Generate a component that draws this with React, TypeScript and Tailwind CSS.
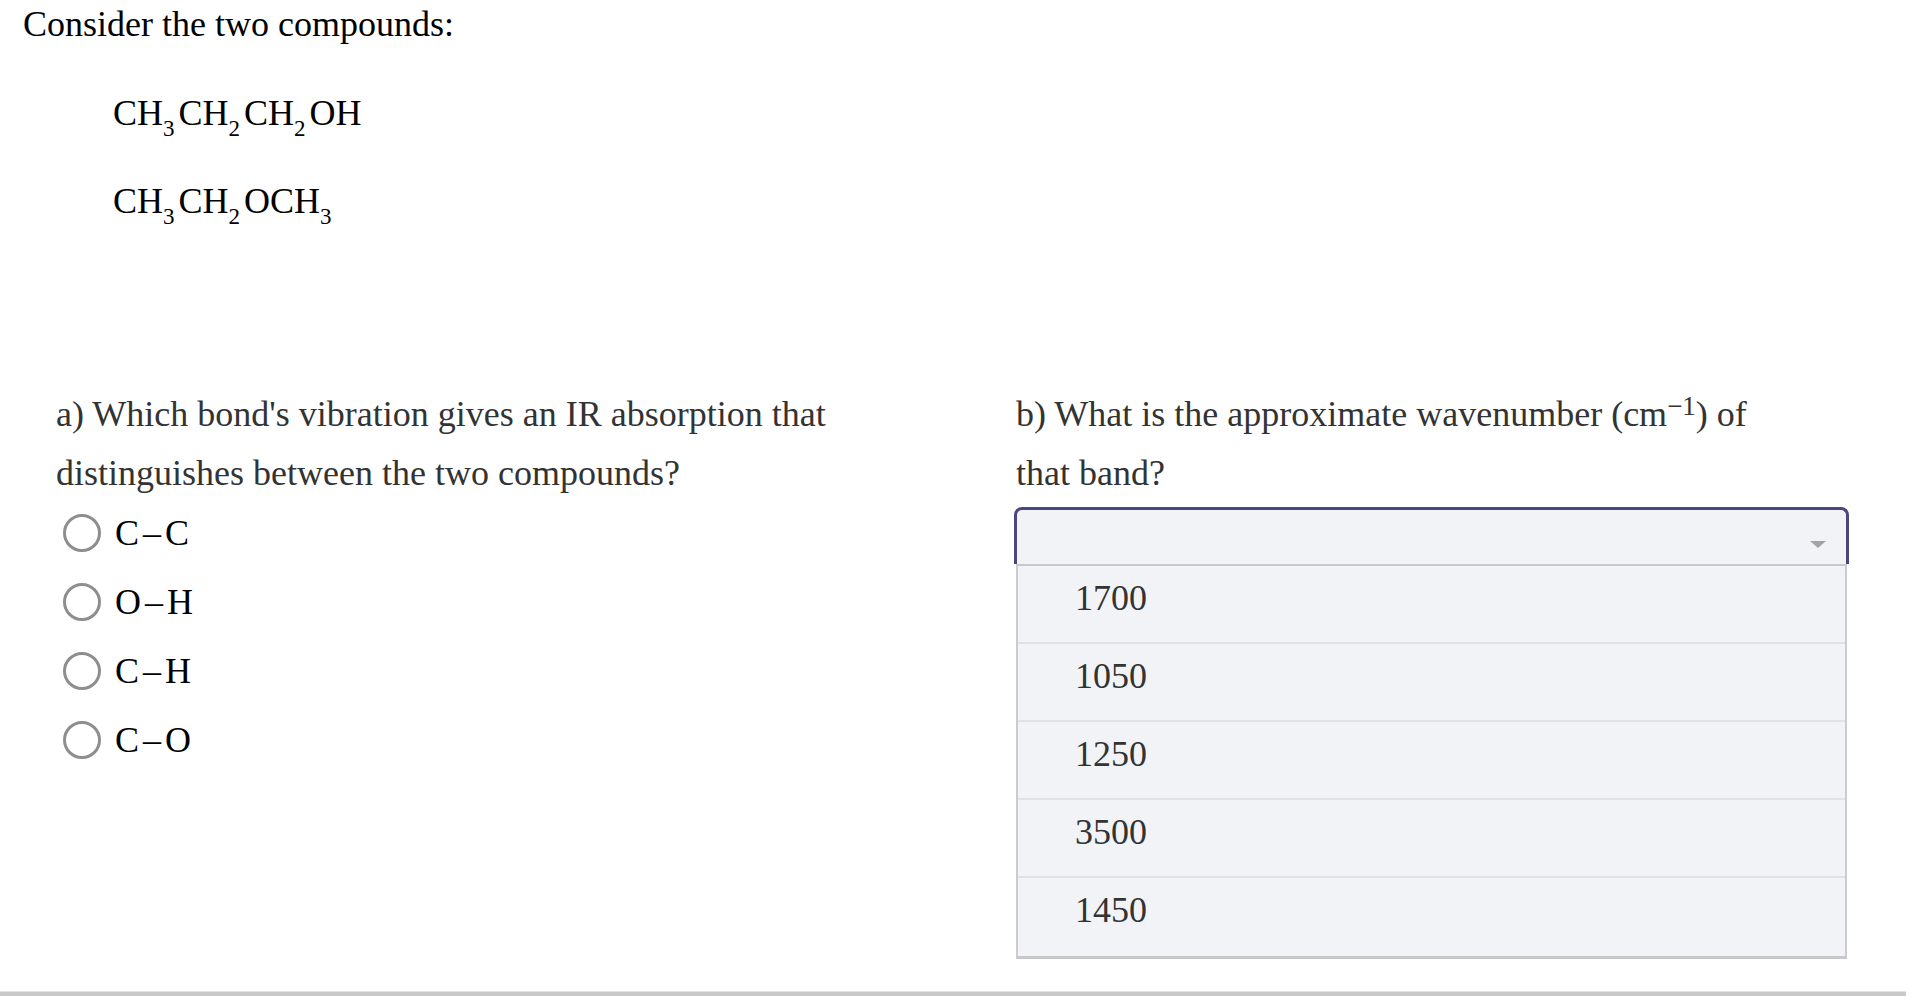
import React from 'react';

const bonds = [
  ['C', 'C'],
  ['O', 'H'],
  ['C', 'H'],
  ['C', 'O'],
];
const bands = ['1700', '1050', '1250', '3500', '1450'];

function Sub({ children }: { children: React.ReactNode }) {
  return <span className="relative top-[11px] mr-[4px] text-[23px] leading-none">{children}</span>;
}

function Radio({ a, b }: { a: string; b: string }) {
  return (
    <label className="flex h-[69px] items-center pl-[7px]">
      <span className="h-[38px] w-[38px] shrink-0 rounded-full border-[3px] border-[#8e8e8e] bg-white" />
      <span className="ml-[14px] text-[36px] leading-[40px] text-black">
        {a}
        <span className="mx-[4px]">–</span>
        {b}
      </span>
    </label>
  );
}

export default function App() {
  return (
    <div className="flex h-screen w-full flex-col overflow-hidden bg-white font-['Liberation_Serif','Times_New_Roman',serif]">
      {/* intro */}
      <div className="pl-[23px] pt-[3px] text-[36px] leading-[43px] text-black">Consider the two compounds:</div>
      <div className="mt-[23px] pl-[113px] text-[36px] leading-[88px] text-black">
        <div>
          CH<Sub>3</Sub>CH<Sub>2</Sub>CH<Sub>2</Sub>OH
        </div>
        <div>
          CH<Sub>3</Sub>CH<Sub>2</Sub>OCH<Sub>3</Sub>
        </div>
      </div>

      {/* questions */}
      <div className="mt-[140px] flex">
        <div className="w-[1016px] shrink-0 pl-[56px]">
          <p className="max-w-[880px] text-[36px] leading-[59px] text-[#333]">
            a) Which bond's vibration gives an IR absorption that distinguishes between the two compounds?
          </p>
          <div className="mt-[-5px] flex flex-col">
            {bonds.map(([a, b]) => (
              <Radio key={a + b} a={a} b={b} />
            ))}
          </div>
        </div>

        <div className="flex-1">
          <p className="max-w-[770px] text-[36px] leading-[59px] text-[#333]">
            b) What is the approximate wavenumber (cm
            <span className="relative top-[-11px] text-[27px] leading-none">−1</span>) of that band?
          </p>
          <div className="ml-[-2px] mt-[4px] w-[835px]">
            <div className="flex h-[57px] justify-end rounded-t-[8px] border-x-[3px] border-t-[3px] border-[#4b4680] bg-[#f2f3f7] pr-[20px] pt-[31px]">
              <svg width="16" height="7" viewBox="0 0 16 7">
                <polygon points="0,0 16,0 8,7" fill="#a3a3a3" />
              </svg>
            </div>
            <ul className="ml-[2px] w-[831px] border-x-2 border-b-[3px] border-t-2 border-x-[#cccccc] border-b-[#c8c8c8] border-t-[#c8c8c8] bg-[#f2f3f7]">
              {bands.map((v, i) => (
                <li
                  key={v}
                  className={`h-[78px] pl-[57px] pt-[12px] text-[36px] leading-[40px] text-[#333] ${
                    i < bands.length - 1 ? 'border-b-2 border-[#e1e2e6]' : ''
                  } ${i === 0 ? 'h-[76px] pt-[11px]' : ''}`}
                >
                  {v}
                </li>
              ))}
            </ul>
          </div>
        </div>
      </div>

      <div className="mt-auto h-[5px] border-t border-[#e2e2e2] bg-[#c9c9c9]" />
    </div>
  );
}
